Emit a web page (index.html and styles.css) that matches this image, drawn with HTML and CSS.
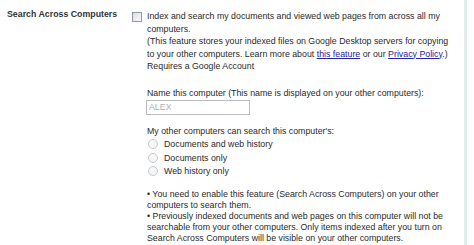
FILE: index.html
```html
<!DOCTYPE html>
<html>
<head>
<meta charset="utf-8">
<link rel="stylesheet" href="styles.css">
</head>
<body>
<div class="page">
  <div class="row">
    <div class="label">Search Across Computers</div>
    <div class="opts">
      <div class="check-row">
        <span class="checkbox"></span>
        <div class="check-text">
          <div class="para">Index and search my documents and viewed web pages from across all my computers.</div>
          <div class="para">(This feature stores your indexed files on Google Desktop servers for copying to your other computers. Learn more about <a href="#">this feature</a> or our <a href="#">Privacy Policy</a>.)</div>
          <div class="req">Requires a Google Account</div>
          <div class="name-label">Name this computer (This name is displayed on your other computers):</div>
          <div class="input">ALEX</div>
          <div class="search-label">My other computers can search this computer's:</div>
          <div class="radios">
            <div class="radio-row"><span class="radio"></span>Documents and web history</div>
            <div class="radio-row"><span class="radio"></span>Documents only</div>
            <div class="radio-row"><span class="radio"></span>Web history only</div>
          </div>
          <div class="notes">
            <div>• You need to enable this feature (Search Across Computers) on your other computers to search them.</div>
            <div>• Previously indexed documents and web pages on this computer will not be searchable from your other computers. Only items indexed after you turn on Search Across Computers will be visible on your other computers.</div>
          </div>
        </div>
      </div>
    </div>
    <div class="edge"></div>
  </div>
</div>
</body>
</html>
```
FILE: styles.css
```css
html, body {
  margin: 0;
  padding: 0;
  background: #ffffff;
}
body {
  font-family: "Liberation Sans", Arial, sans-serif;
  font-size: 8.8px;
  line-height: 12.5px;
  color: #2a2a2a;
  overflow: hidden;
  height: 245px;
}
.page {
  width: 474px;
}
.row {
  display: flex;
  align-items: flex-start;
}
.label {
  width: 124px;
  padding-left: 7px;
  padding-top: 8px;
  font-weight: bold;
  font-size: 8.8px;
  color: #333;
  flex: none;
}
.opts {
  flex: none;
  width: 330px;
  padding-top: 10px;
}
.check-row {
  display: flex;
  align-items: flex-start;
}
.checkbox {
  flex: none;
  width: 8px;
  height: 8px;
  border: 1px solid #8e9aa6;
  background: linear-gradient(135deg, #dcdcdc, #fafafa);
  margin-top: 2px;
  margin-left: 1px;
  margin-right: 5px;
}
.check-text {
  width: 307px;
}
a {
  color: #2222aa;
  text-decoration: underline;
}
.req {
  margin-top: 0;
}
.name-label {
  margin-top: 14px;
}
.input {
  width: 100px;
  height: 13px;
  line-height: 13px;
  border: 1px solid #b8bcc0;
  color: #b0b0b0;
  padding-left: 2px;
  margin-left: -1px;
  margin-top: 1px;
}
.search-label {
  margin-top: 10px;
}
.radios {
  margin-top: 0;
}
.radio-row {
  display: flex;
  align-items: center;
  height: 13.5px;
}
.radio {
  width: 8px;
  height: 8px;
  border: 1px solid #c8cdd2;
  border-radius: 50%;
  background: #f6f6f6;
  margin-left: 1px;
  margin-right: 6px;
}
.notes {
  margin-top: 11px;
  line-height: 11px;
}
.edge {
  flex: none;
  width: 3px;
  height: 245px;
  margin-left: 3px;
  background: #e2eaf2;
}
```
